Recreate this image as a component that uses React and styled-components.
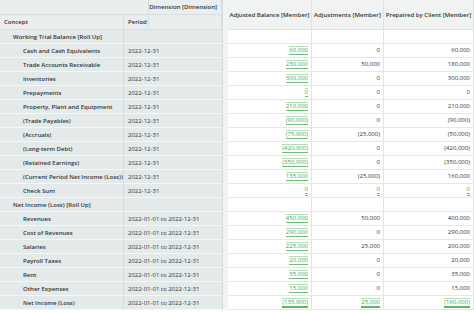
import React from "react";
import styled, { createGlobalStyle, css } from "styled-components";

const Global = createGlobalStyle`
  body {
    margin: 0;
    background: #ffffff;
    font-family: "Open Sans", "Noto Sans", sans-serif;
    color: #333;
  }
`;

const Grid = styled.div`
  display: grid;
  grid-template-columns: 124px 25px 73px 6px 84px 72px 90px;
  grid-template-rows: 15px 15px repeat(20, 14px);
  width: 474px;
  font-size: 6px;
  background: #fff;
`;

const HeadCell = styled.div`
  background: #eaeeee;
  border-right: 1px solid #d8dede;
  border-bottom: 1px solid #d8dede;
  display: flex;
  align-items: center;
  justify-content: ${p => p.align || "flex-start"};
  padding: 0 4px;
  font-weight: 600;
  white-space: nowrap;
  overflow: hidden;
  grid-column: ${p => p.col};
  grid-row: ${p => p.row};
`;

const ColHead = styled.div`
  grid-row: 1 / 3;
  display: flex;
  align-items: center;
  justify-content: center;
  font-weight: 600;
  white-space: nowrap;
  background: #f1f3f3;
  border-right: 1px solid #dfe2e2;
  border-bottom: 1px solid #dfe2e2;
`;

const Sep = styled.div`
  background: #f2f4f4;
  border-left: 1px solid #d6dcdc;
  grid-column: 4;
  grid-row: ${p => p.row};
`;

const LabelCell = styled.div`
  grid-column: 1;
  background: #e4eaea;
  border-bottom: 1px solid #f6f8f8;
  border-right: 1px solid #d4dbdb;
  display: flex;
  align-items: center;
  padding-left: ${p => (p.level === 0 ? 13 : 23)}px;
  font-weight: 600;
  white-space: nowrap;
  overflow: hidden;
`;

const PeriodCell = styled.div`
  grid-column: 2 / 4;
  background: #e4eaea;
  border-bottom: 1px solid #f6f8f8;
  display: flex;
  align-items: center;
  padding-left: 4px;
  white-space: nowrap;
`;

const ValueCell = styled.div`
  background: #fff;
  border-right: 1px solid #e2e4e4;
  border-bottom: 1px solid #e6e8e8;
  display: flex;
  align-items: center;
  justify-content: flex-end;
  padding-right: 3px;
  white-space: nowrap;
`;

const Amount = styled.span`
  line-height: 7px;
  ${p =>
    p.kind === "calc" &&
    css`
      color: #4a9f52;
      border-top: 1px solid #b5dcb9;
      border-bottom: 1px solid #6cbf74;
    `}
  ${p =>
    p.kind === "sum" &&
    css`
      color: #4a9f52;
      border-bottom: 3px double #6cbf74;
    `}
  ${p =>
    p.kind === "total" &&
    css`
      color: #4a9f52;
      border-top: 1px solid #b5dcb9;
      border-bottom: 2px solid #5cb865;
    `}
`;

const rows = [
  { label: "Working Trial Balance [Roll Up]", level: 0 },
  { label: "Cash and Cash Equivalents", period: "2022-12-31", v: ["60,000", "0", "60,000"] },
  { label: "Trade Accounts Receivable", period: "2022-12-31", v: ["230,000", "50,000", "180,000"] },
  { label: "Inventories", period: "2022-12-31", v: ["300,000", "0", "300,000"] },
  { label: "Prepayments", period: "2022-12-31", v: ["0", "0", "0"] },
  { label: "Property, Plant and Equipment", period: "2022-12-31", v: ["210,000", "0", "210,000"] },
  { label: "(Trade Payables)", period: "2022-12-31", v: ["(90,000)", "0", "(90,000)"] },
  { label: "(Accruals)", period: "2022-12-31", v: ["(75,000)", "(25,000)", "(50,000)"] },
  { label: "(Long-term Debt)", period: "2022-12-31", v: ["(420,000)", "0", "(420,000)"] },
  { label: "(Retained Earnings)", period: "2022-12-31", v: ["(350,000)", "0", "(350,000)"] },
  { label: "(Current Period Net Income (Loss))", period: "2022-12-31", v: ["135,000", "(25,000)", "160,000"] },
  { label: "Check Sum", period: "2022-12-31", v: ["0", "0", "0"], sum: true },
  { label: "Net Income (Loss) [Roll Up]", level: 0 },
  { label: "Revenues", period: "2022-01-01 to 2022-12-31", v: ["450,000", "50,000", "400,000"] },
  { label: "Cost of Revenues", period: "2022-01-01 to 2022-12-31", v: ["290,000", "0", "290,000"] },
  { label: "Salaries", period: "2022-01-01 to 2022-12-31", v: ["225,000", "25,000", "200,000"] },
  { label: "Payroll Taxes", period: "2022-01-01 to 2022-12-31", v: ["20,000", "0", "20,000"] },
  { label: "Rent", period: "2022-01-01 to 2022-12-31", v: ["35,000", "0", "35,000"] },
  { label: "Other Expenses", period: "2022-01-01 to 2022-12-31", v: ["15,000", "0", "15,000"] },
  { label: "Net Income (Loss)", period: "2022-01-01 to 2022-12-31", v: ["(135,000)", "25,000", "(160,000)"], total: true },
];

const kindFor = (row, i) => {
  if (row.sum) return "sum";
  if (row.total) return "total";
  return i === 0 ? "calc" : undefined;
};

const App = () => {
  return (
    <>
      <Global />
      <Grid>
        <HeadCell col="1 / 3" row="1" />
        <HeadCell col="3" row="1" align="flex-end">Dimension [Dimension]</HeadCell>
        <HeadCell col="1" row="2">Concept</HeadCell>
        <HeadCell col="2" row="2">Period</HeadCell>
        <HeadCell col="3" row="2" />
        <Sep row="1 / 3" />
        <ColHead>Adjusted Balance [Member]</ColHead>
        <ColHead>Adjustments [Member]</ColHead>
        <ColHead>Prepaired by Client [Member]</ColHead>
        {rows.map((row, r) => (
          <React.Fragment key={r}>
            <LabelCell level={row.level}>{row.label}</LabelCell>
            <PeriodCell>{row.period}</PeriodCell>
            <Sep row={r + 3} />
            {[0, 1, 2].map(i => (
              <ValueCell key={i}>
                {row.v && <Amount kind={kindFor(row, i)}>{row.v[i]}</Amount>}
              </ValueCell>
            ))}
          </React.Fragment>
        ))}
      </Grid>
    </>
  );
};

export default App;
